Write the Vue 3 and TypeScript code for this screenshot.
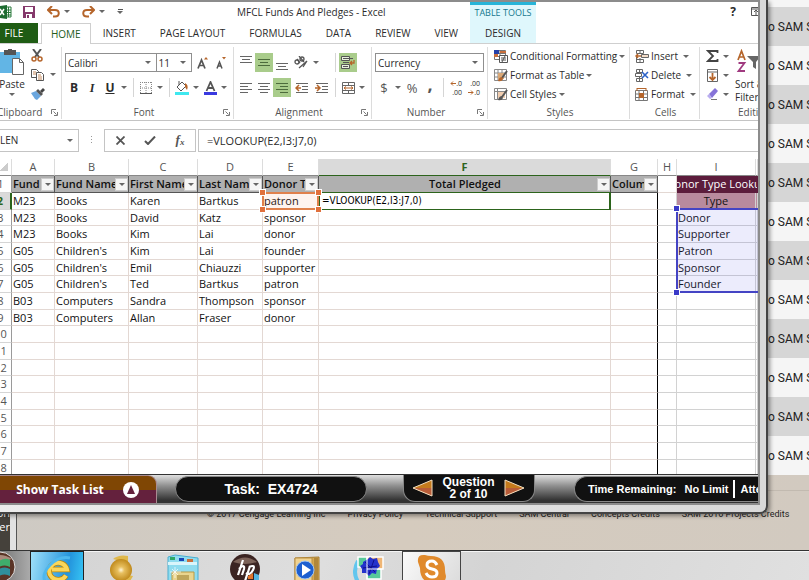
<script setup lang="ts">
import { ref } from 'vue'

interface Donation {
  fund: string
  fundName: string
  first: string
  last: string
  donor: string
}

const donations: Donation[] = [
  { fund: 'M23', fundName: 'Books', first: 'Karen', last: 'Bartkus', donor: 'patron' },
  { fund: 'M23', fundName: 'Books', first: 'David', last: 'Katz', donor: 'sponsor' },
  { fund: 'M23', fundName: 'Books', first: 'Kim', last: 'Lai', donor: 'donor' },
  { fund: 'G05', fundName: "Children's", first: 'Kim', last: 'Lai', donor: 'founder' },
  { fund: 'G05', fundName: "Children's", first: 'Emil', last: 'Chiauzzi', donor: 'supporter' },
  { fund: 'G05', fundName: "Children's", first: 'Ted', last: 'Bartkus', donor: 'patron' },
  { fund: 'B03', fundName: 'Computers', first: 'Sandra', last: 'Thompson', donor: 'sponsor' },
  { fund: 'B03', fundName: 'Computers', first: 'Allan', last: 'Fraser', donor: 'donor' },
]
const lookup: string[] = ['Type', 'Donor', 'Supporter', 'Patron', 'Sponsor', 'Founder']
const headings: string[] = ['Fund', 'Fund Name', 'First Name', 'Last Name', 'Donor Type', 'Total Pledged', 'Column1']
const letters: string[] = ['A', 'B', 'C', 'D', 'E', 'F', 'G', 'H', 'I', '']
const tabs: string[] = ['HOME', 'INSERT', 'PAGE LAYOUT', 'FORMULAS', 'DATA', 'REVIEW', 'VIEW']
const credits: string[] = [
  '© 2017 Cengage Learning Inc',
  'Privacy Policy',
  'Technical Support',
  'SAM Central',
  'Concepts Credits',
  'SAM 2016 Projects Credits',
]

const formula = ref('=VLOOKUP(E2,I3:J7,0)')
const nameBox = ref('LEN')
const fontName = ref('Calibri')
const fontSize = ref('11')
const numberFormat = ref('Currency')
</script>

<template>
  <div class="desktop">
    <div class="stage">
      <div class="site">
        <ul class="bands">
          <li v-for="n in 13" :key="n"><span v-if="n > 1">o SAM S</span></li>
        </ul>
        <footer class="credits">
          <a v-for="c in credits" :key="c" href="#">{{ c }}</a>
        </footer>
        <div class="peek"><span>on</span><span>ter</span></div>
      </div>

      <main class="window">
        <div class="app">
          <header class="chrome">
            <div class="titlebar">
              <svg class="xl" width="12" height="14" viewBox="0 0 12 14"><path d="M5 2h6v10H5z" fill="#fff" stroke="#2b7a3c" /><path d="M6 5h5M6 7.500h5M6 10h5M8.500 2v10" stroke="#2b7a3c" /><path d="M0 1l7-1v14l-7-1z" fill="#1e6b30" /><path d="M0 4l4 6M4 4l-4 6" stroke="#fff" stroke-width="1.500" /></svg>
              <button class="qa" aria-label="Save"><svg width="12" height="12" viewBox="0 0 12 12"><path d="M0 0h12v12H0z" fill="#85386b" /><path d="M2 1h8v5H2z" fill="#fff" /><path d="M3 8h6v4H3z" fill="#fff" /><path d="M4 9h2v3H4z" fill="#85386b" /></svg></button>
              <button class="qa" aria-label="Undo"><svg width="13" height="12" viewBox="0 0 13 12"><path d="M5 0L1 4l4 4M1.500 4H8c5 0 5 6.500 0 6.500H6" fill="none" stroke="#b5652b" stroke-width="2" /></svg><i class="caret" /></button>
              <button class="qa" aria-label="Redo"><svg width="13" height="12" viewBox="0 0 13 12"><path d="M8 0l4 4-4 4M11.500 4H5c-5 0-5 6.500 0 6.500h2" fill="none" stroke="#b5652b" stroke-width="2" /></svg><i class="caret" /></button>
              <button class="qa more" aria-label="Customize"><i class="dash" /><i class="caret" /></button>
              <h1>MFCL Funds And Pledges - Excel</h1>
            </div>
            <div class="context-title">TABLE TOOLS</div>
            <div class="sys">
              <button aria-label="Help">?</button>
              <button aria-label="Ribbon display options"><svg width="10" height="9" viewBox="0 0 10 9"><path d="M.5.500h9v8h-9zM.5 2h9" fill="none" stroke="#555" /><path d="M5 3v5M3 5l2-2 2 2" fill="none" stroke="#555" /></svg></button>
            </div>
            <nav class="tabs">
              <button class="file">FILE</button>
              <button v-for="t in tabs" :key="t" :class="{ active: t === 'HOME' }">{{ t }}</button>
            </nav>
            <button class="design">DESIGN</button>
            <div class="tabfill" />
          </header>

          <section class="ribbon">
            <div class="group clipboard">
              <div class="body">
                <button class="paste">
                  <svg width="24" height="26" viewBox="0 0 24 26"><path d="M0 3h20v21H0z" fill="#62b5e5" /><path d="M4 1h12v5H4z" fill="#555" /><path d="M8 0h4v3H8z" fill="#555" /><path d="M12.500 9.500h7l4 4v12h-11z" fill="#fff" stroke="#666" /><path d="M19.500 9.500v4h4" fill="none" stroke="#666" /></svg>
                  <span>Paste</span><i class="caret" />
                </button>
                <div class="clips">
                  <button aria-label="Cut"><svg width="12" height="13" viewBox="0 0 12 13"><path d="M2 0l6 8M10 0L4 8" stroke="#555" stroke-width="2" /><g fill="none" stroke="#b5652b" stroke-width="1.500"><circle cx="3" cy="10" r="2" /><circle cx="9" cy="10" r="2" /></g></svg></button>
                  <button aria-label="Copy"><svg width="14" height="12" viewBox="0 0 14 12"><g fill="#fff" stroke="#555"><path d="M.5.500h5l2 2v6h-7z" /><path d="M5.500 3.500h5l2 2v6h-7z" /></g><path d="M2 3h3M2 5h3M7 6h3M7 8h4M7 10h4" stroke="#c58a5c" /></svg><i class="caret" /></button>
                  <button aria-label="Format Painter"><svg width="14" height="12" viewBox="0 0 14 12"><path d="M0 5l5-2 5 5-4 4-2-1z" fill="#6aa6de" /><path d="M5 3l2-2 5 5-2 2z" fill="#555" /><path d="M9 3l3-3 2 2-3 3z" fill="#444" /></svg></button>
                </div>
              </div>
              <div class="caption"><span>Clipboard</span><button class="launch" aria-label="Clipboard options"><svg width="7" height="7" viewBox="0 0 7 7"><path d="M.5 5V.500H5M2.500 2.500l3 3M6.500 3v3.500H3" fill="none" stroke="#777" /></svg></button></div>
            </div>

            <div class="group font">
              <div class="line">
                <label class="pick name"><select v-model="fontName" aria-label="Font"><option>Calibri</option></select><i class="caret" /></label>
                <label class="pick size"><select v-model="fontSize" aria-label="Font size"><option>11</option></select><i class="caret" /></label>
                <button class="tool grow" aria-label="Grow font"><svg width="12" height="12" viewBox="0 0 12 12"><path d="M1 11.500L4.500 3 8 11.500M2.500 8.500h4" fill="none" stroke="#555" stroke-width="1.700" /><path d="M7 2.500L9 0l2 2.500z" fill="#b5652b" /></svg></button>
                <button class="tool" aria-label="Shrink font"><svg width="12" height="12" viewBox="0 0 12 12"><path d="M2 11.500L4.500 5 7 11.500M3 9h3" fill="none" stroke="#555" stroke-width="1.500" /><path d="M7 0h4L9 2.500z" fill="#b5652b" /></svg></button>
              </div>
              <div class="line">
                <button class="tool b">B</button><button class="tool i">I</button><button class="tool u">U</button><button class="drop" aria-label="Underline styles"><i class="caret" /></button>
                <i class="sep" />
                <button class="tool" aria-label="Borders"><svg width="12" height="12" viewBox="0 0 12 12"><path d="M0 .5h12M.5 0v11M11.500 0v11M6 0v11M0 6h12" stroke="#888" stroke-dasharray="1 1" /><path d="M0 11.500h12" stroke="#555" /></svg></button><button class="drop" aria-label="Border styles"><i class="caret" /></button>
                <i class="sep" />
                <button class="tool" aria-label="Fill color"><svg width="14" height="14" viewBox="0 0 14 14"><path d="M2 6l5-5 4 4-5 5z" fill="#fff" stroke="#555" /><path d="M4 4V0" stroke="#555" /><path d="M10 2q4 2 2 7l-2-3z" fill="#b5652b" /><path d="M0 11h14v3H0z" fill="#3fe8ef" /></svg></button><button class="drop" aria-label="Fill colors"><i class="caret" /></button>
                <button class="tool" aria-label="Font color"><svg width="13" height="14" viewBox="0 0 13 14"><path d="M2.500 10L6.500 1l4 9M4 7h5" fill="none" stroke="#555" stroke-width="1.800" /><path d="M0 11h13v3H0z" fill="#3a3ae0" /></svg></button><button class="drop" aria-label="Font colors"><i class="caret" /></button>
              </div>
              <div class="caption"><span>Font</span><button class="launch" aria-label="Font options"><svg width="7" height="7" viewBox="0 0 7 7"><path d="M.5 5V.500H5M2.500 2.500l3 3M6.500 3v3.500H3" fill="none" stroke="#777" /></svg></button></div>
            </div>

            <div class="group align">
              <div class="line">
                <button class="tool up" aria-label="Top align"><svg width="12" height="7" viewBox="0 0 12 7"><path d="M0 .5h12M2 3.500h8M0 6.500h12" stroke="#666" /></svg></button>
                <button class="tool on" aria-label="Middle align"><svg width="12" height="7" viewBox="0 0 12 7"><path d="M0 .5h12M2 3.500h8M0 6.500h12" stroke="#4d6b3c" /></svg></button>
                <button class="tool down" aria-label="Bottom align"><svg width="12" height="7" viewBox="0 0 12 7"><path d="M0 .5h12M2 3.500h8M0 6.500h12" stroke="#666" /></svg></button>
                <button class="tool wide" aria-label="Orientation"><svg width="14" height="13" viewBox="0 0 14 13"><g fill="none" stroke="#555" stroke-width="1.300"><circle cx="3" cy="6" r="2" /><path d="M3 3l3 4M5 0l5 6" /><circle cx="8" cy="3" r="2" /><path d="M5 12l8-7M9 11l4-6" /></g></svg></button><button class="drop" aria-label="Orientations"><i class="caret" /></button>
                <i class="sep push" />
                <button class="tool on" aria-label="Wrap text"><svg width="14" height="13" viewBox="0 0 14 13"><path d="M.5.500h8v4h-8zM.5 8.500h8v4h-8z" fill="#e8f0dd" stroke="#555" /><path d="M2 2.500h10M2 6.500h6M2 10.500h5" stroke="#555" /><path d="M13 4v3H9M11 5L9 7l2 2" fill="none" stroke="#b5652b" stroke-width="1.300" /></svg></button>
              </div>
              <div class="line">
                <button class="tool" aria-label="Align left"><svg width="12" height="10" viewBox="0 0 12 10"><path d="M0 .5h12M0 3.500h8M0 6.500h12M0 9.500h8" stroke="#666" /></svg></button>
                <button class="tool" aria-label="Center"><svg width="12" height="10" viewBox="0 0 12 10"><path d="M0 .5h12M2 3.500h8M0 6.500h12M2 9.500h8" stroke="#666" /></svg></button>
                <button class="tool on" aria-label="Align right"><svg width="12" height="10" viewBox="0 0 12 10"><path d="M0 .5h12M4 3.500h8M0 6.500h12M4 9.500h8" stroke="#4d6b3c" /></svg></button>
                <button class="tool wide" aria-label="Decrease indent"><svg width="13" height="10" viewBox="0 0 13 10"><path d="M1 .5h12M7 3.500h6M7 6.500h6M1 9.500h12" stroke="#666" /><path d="M6 5H1M4 2L1 5l3 3" fill="none" stroke="#b5652b" stroke-width="1.500" /></svg></button>
                <button class="tool wide" aria-label="Increase indent"><svg width="13" height="10" viewBox="0 0 13 10"><path d="M1 .5h12M7 3.500h6M7 6.500h6M1 9.500h12" stroke="#666" /><path d="M0 5h5M2 2l3 3-3 3" fill="none" stroke="#b5652b" stroke-width="1.500" /></svg></button>
                <i class="sep" />
                <button class="tool" aria-label="Merge and center"><svg width="13" height="12" viewBox="0 0 13 12"><path d="M.5.500h12v11H.5zM.5 3.500h12M.5 8.500h12M6.500 0v3M6.500 9v3" fill="#fff" stroke="#666" /><path d="M2 6h9M4 4.500L2 6l2 1.500M9 4.500L11 6 9 7.500" fill="none" stroke="#b5652b" /></svg></button><button class="drop" aria-label="Merge options"><i class="caret" /></button>
              </div>
              <div class="caption"><span>Alignment</span><button class="launch" aria-label="Alignment options"><svg width="7" height="7" viewBox="0 0 7 7"><path d="M.5 5V.500H5M2.500 2.500l3 3M6.500 3v3.500H3" fill="none" stroke="#777" /></svg></button></div>
            </div>

            <div class="group number">
              <div class="line">
                <label class="pick format"><select v-model="numberFormat" aria-label="Number format"><option>Currency</option></select><i class="caret" /></label>
              </div>
              <div class="line">
                <button class="tool sym">$</button><button class="drop" aria-label="Accounting formats"><i class="caret" /></button>
                <button class="tool sym">%</button><button class="tool comma">,</button>
                <i class="sep" />
                <button class="tool dec" aria-label="Increase decimal"><span><svg width="6" height="5" viewBox="0 0 6 5"><path d="M6 2.500H1M3 .5l-2 2 2 2" fill="none" stroke="#b5652b" /></svg>.0</span><span>.00</span></button>
                <button class="tool dec" aria-label="Decrease decimal"><span>.00</span><span><svg width="6" height="5" viewBox="0 0 6 5"><path d="M0 2.500h5M3 .5l2 2-2 2" fill="none" stroke="#b5652b" /></svg>.0</span></button>
              </div>
              <div class="caption"><span>Number</span><button class="launch" aria-label="Number options"><svg width="7" height="7" viewBox="0 0 7 7"><path d="M.5 5V.500H5M2.500 2.500l3 3M6.500 3v3.500H3" fill="none" stroke="#777" /></svg></button></div>
            </div>

            <div class="group styles">
              <div class="stack">
                <button><svg width="14" height="13" viewBox="0 0 14 13"><path d="M.5.500h11v9H.5zM6 0v9M0 3.500h11M0 6.500h11" fill="#fff" stroke="#777" /><path d="M0 0h5v4H0z" fill="#2440a8" /><path d="M6 1h6v2H6z" fill="#c96f3c" /><path d="M0 4h4v3H0z" fill="#c96f3c" /><path d="M5.500 5.500h8v7h-8z" fill="#fff" stroke="#555" /><path d="M7 8h5M7 10h5M11 6l-3 6" stroke="#555" /></svg>Conditional Formatting<i class="caret" /></button>
                <button><svg width="14" height="13" viewBox="0 0 14 13"><path d="M.5.500h12v11H.5zM4 0v11M8 0v11M0 4h12M0 8h12" fill="#fff" stroke="#888" /><path d="M4 4h6v6H4z" fill="#d9a877" /><path d="M13 2L8 9" stroke="#555" stroke-width="2" /><path d="M4 12q1-4 4-4l1 2q-1 3-5 2z" fill="#b5652b" /></svg>Format as Table<i class="caret" /></button>
                <button><svg width="14" height="13" viewBox="0 0 14 13"><path d="M.5.500h12v11H.5zM3.500 0v11M0 3.500h12" fill="#fff" stroke="#888" /><path d="M4 4h7v6H4z" fill="#f0cdb0" /><path d="M13 2L8 9" stroke="#555" stroke-width="2" /><path d="M4 12q1-4 4-4l1 2q-1 3-5 2z" fill="#555" /></svg>Cell Styles<i class="caret" /></button>
              </div>
              <div class="caption"><span>Styles</span></div>
            </div>

            <div class="group cells">
              <div class="stack">
                <button><svg width="14" height="13" viewBox="0 0 14 13"><path d="M1.500.5h7v3h-7zM5 0v4M1.500 9.500h7v3h-7zM5 8v5M1.500 6v4" fill="#fff" stroke="#666" /><path d="M6.500 4.500h7v3h-7z" fill="#f3dcc8" stroke="#666" /><path d="M6 6H1M3 4L1 6l2 2" fill="none" stroke="#b5652b" stroke-width="1.500" /></svg><span>Insert</span><i class="caret" /></button>
                <button><svg width="14" height="13" viewBox="0 0 14 13"><path d="M1.500.5h6v3h-6zM4.500 0v4M1.500 9.500h6v3h-6zM4.500 8v5M.5 4.500h6v3h-6z" fill="#fff" stroke="#666" /><path d="M7 3l6 6M13 3L7 9" stroke="#2c62c8" stroke-width="1.600" /></svg><span>Delete</span><i class="caret" /></button>
                <button><svg width="14" height="13" viewBox="0 0 14 13"><path d="M.5 2.500h12v10H.5zM4 2v10M8.500 2v10M0 6h12M0 9.500h12" fill="#fff" stroke="#777" /><path d="M4 5h5v5H4z" fill="#b5652b" /><path d="M2 .5h9M2 0v3M11 0v3" stroke="#b5652b" /></svg><span>Format</span><i class="caret" /></button>
              </div>
              <div class="caption"><span>Cells</span></div>
            </div>

            <div class="group editing">
              <div class="body">
                <div class="stack">
                  <button aria-label="AutoSum"><svg width="13" height="12" viewBox="0 0 13 12"><path d="M11.500 3V1H2l5 5-5 5h9.500V9" fill="none" stroke="#444" stroke-width="1.800" /></svg><i class="caret" /></button>
                  <button aria-label="Fill"><svg width="13" height="13" viewBox="0 0 13 13"><path d="M1.500.5h10v12h-10zM1.500 3h10" fill="#fff" stroke="#666" /><path d="M6.500 4v7M3.500 8l3 3 3-3" fill="none" stroke="#b5652b" stroke-width="1.800" /></svg><i class="caret" /></button>
                  <button aria-label="Clear"><svg width="13" height="12" viewBox="0 0 13 12"><path d="M3 6l6-6 3 3-6 7z" fill="#8673d8" /><path d="M3 6l3 4-2 1-3-3z" fill="#b9adf0" /><path d="M5 11.500h6" stroke="#777" /></svg><i class="caret" /></button>
                </div>
                <button class="sort">
                  <svg width="26" height="24" viewBox="0 0 26 24"><path d="M3 11L6.500 2 10 11M4.500 8h4" fill="none" stroke="#b5652b" stroke-width="1.700" /><path d="M3.500 14h6l-6 8h6.500" fill="none" stroke="#a03a80" stroke-width="1.800" /><path d="M12 7h14l-5 6v7l-3-2v-5z" fill="#666" /></svg>
                  <span>Sort &amp;</span><span>Filter</span>
                </button>
              </div>
              <div class="caption"><span>Editing</span></div>
            </div>
          </section>

          <section class="entry">
            <label class="namebox"><input v-model="nameBox" aria-label="Name box" /><i class="caret" /></label>
            <i class="dots" />
            <div class="confirm">
              <button aria-label="Cancel"><svg width="9" height="9" viewBox="0 0 9 9"><path d="M.5.500l8 8M8.500.5l-8 8" stroke="#555" stroke-width="1.800" /></svg></button>
              <button aria-label="Enter"><svg width="12" height="9" viewBox="0 0 12 9"><path d="M1 5l3 3 7-7.500" fill="none" stroke="#555" stroke-width="2" /></svg></button>
              <button class="fx" aria-label="Insert function">f<small>x</small></button>
            </div>
            <input v-model="formula" class="formula" aria-label="Formula" />
          </section>

          <section class="sheet">
            <table>
              <colgroup><col class="c-n" /><col class="c-a" /><col class="c-b" /><col class="c-c" /><col class="c-d" /><col class="c-e" /><col /><col class="c-g" /><col class="c-h" /><col class="c-i" /><col class="c-j" /></colgroup>
              <thead>
                <tr><th class="corner"><i /></th><th v-for="l in letters" :key="l" :class="{ current: l === 'F' }">{{ l }}</th></tr>
              </thead>
              <tbody>
                <tr class="fields">
                  <th>1</th>
                  <th v-for="h in headings" :key="h" class="field" :class="{ mid: h === 'Total Pledged' }"><div><span>{{ h }}</span><button :aria-label="'Filter ' + h"><i class="caret" /></button></div></th>
                  <td />
                  <td colspan="2" class="lookup-title"><div><span>Donor Type Lookup</span></div></td>
                </tr>
                <tr v-for="n in 17" :key="n">
                  <th :class="{ current: n === 1 }">{{ n + 1 }}</th>
                  <td>{{ donations[n - 1]?.fund }}</td>
                  <td>{{ donations[n - 1]?.fundName }}</td>
                  <td>{{ donations[n - 1]?.first }}</td>
                  <td>{{ donations[n - 1]?.last }}</td>
                  <td :class="{ host: n === 1 }">{{ donations[n - 1]?.donor }}<i v-if="n === 1" class="range orange"><b /><b /><b /><b /></i></td>
                  <td :class="{ host: n === 1, draft: n === 1 }"><template v-if="n === 1">{{ formula }}<i class="cellbox" /></template></td>
                  <td class="edge" />
                  <td class="plain" />
                  <td class="plain" :class="{ kind: n === 1, host: n === 2 }">{{ lookup[n - 1] }}<i v-if="n === 2" class="range blue"><b /><b /></i></td>
                  <td class="plain" :class="{ kind: n === 1 }" />
                </tr>
              </tbody>
            </table>
          </section>

          <footer class="exam">
            <button class="tasks">Show Task List<svg width="18" height="18" viewBox="0 0 18 18"><circle cx="9" cy="9" r="8" fill="#fff" /><path d="M9 4l4 9H5z" fill="#64213d" /></svg></button>
            <div class="pill task">Task:&nbsp; EX4724</div>
            <div class="question">
              <button aria-label="Previous question"><svg width="22" height="18" viewBox="0 0 22 18"><path d="M1 9l19-8v16z" fill="#c47a1c" /><path d="M1 9h19v8z" fill="#b85c38" /><path d="M1 9l19-8v16z" fill="none" stroke="#f3dfc0" /></svg></button>
              <p>Question<br />2 of 10</p>
              <button aria-label="Next question"><svg width="22" height="18" viewBox="0 0 22 18"><path d="M21 9L2 1v16z" fill="#c47a1c" /><path d="M21 9H2v8z" fill="#b85c38" /><path d="M21 9L2 1v16z" fill="none" stroke="#f3dfc0" /></svg></button>
            </div>
            <div class="pill time"><span>Time Remaining:</span><span class="limit">No Limit</span><span class="attempts">Attempts</span></div>
          </footer>
        </div>
      </main>
    </div>

    <nav class="taskbar">
      <button class="start" aria-label="Start"><svg width="32" height="32" viewBox="0 0 32 32"><circle cx="16" cy="16" r="15" fill="#5a3426" stroke="#ddd" /><path d="M4 8q12-8 24 0-10 4-24 0z" fill="#a88a7c" /><path d="M15 10q6-4 11-1v7q-5-3-11 0z" fill="#3fae6c" /><path d="M15 18q6-3 11 0v7q-5-3-11 0z" fill="#2f8f9c" /></svg></button>
      <button class="ie" aria-label="Internet Explorer"><svg width="32" height="30" viewBox="0 0 32 30"><path d="M25 21.500a9 8.500 0 1 1 1-6H11" fill="none" stroke="#b8860b" stroke-width="5.500" /><path d="M25 21.500a9 8.500 0 1 1 1-6H11" fill="none" stroke="#fbd65a" stroke-width="4" /><path d="M4 27C-1 18 14 1 29 4" fill="none" stroke="#4db8ee" stroke-width="3" /></svg></button>
      <button class="item" aria-label="Sync"><svg width="26" height="30" viewBox="0 0 26 30"><defs><radialGradient id="gold"><stop offset="0" stop-color="#fff6d8" /><stop offset=".3" stop-color="#e8c060" /><stop offset="1" stop-color="#c08a1c" /></radialGradient></defs><path d="M5 5q6-5 15-3v7z" fill="#dfb84b" /><path d="M14 20l11 2-4 7z" fill="#dfb84b" /><circle cx="13" cy="16" r="11" fill="url(#gold)" /></svg></button>
      <button class="item" aria-label="Explorer"><svg width="32" height="29" viewBox="0 0 32 29"><path d="M1 3l7-2 23 3v25H1z" fill="#8fdcef" stroke="#4aaed0" /><path d="M3 3h5v3H3z" fill="#2fa866" /><path d="M12 4h5v3h-5z" fill="#1846b8" /><path d="M20 5h6v3h-6z" fill="#c96f3c" /><path d="M1 8h29v3H1z" fill="#d9f5fb" /><path d="M5 18h22v11H5z" fill="#e9d58e" stroke="#b89a45" /><path d="M10 21h12v8H10z" fill="#bfa65a" /><path d="M8 13v11M3 18h11M5 15l6 6M11 15l-6 6" stroke="#fff" stroke-width=".7" /></svg></button>
      <button class="item" aria-label="HP Support"><svg width="32" height="30" viewBox="0 0 32 30"><circle cx="16" cy="15" r="15" fill="#3b2422" /><path d="M4 8q12-9 24 0-12 4-24 0z" fill="#7c6258" /><path d="M14 6l-5 15M10 15q6-6 5 0l-2 6M21 12l-5 15M20 13q7-3 4 3t-7 3" fill="none" stroke="#fff" stroke-width="2.200" /><path d="M19 22l5-3v6h-5z" fill="#e3752b" /><path d="M25 19l5 2v5h-5z" fill="#54b4e0" /><path d="M19 26h5v4h-5z" fill="#3fa9e0" /><path d="M25 26h5v4h-5z" fill="#efc23d" /></svg></button>
      <button class="item" aria-label="Media Player"><svg width="30" height="28" viewBox="0 0 30 28"><path d="M3 4l24-1v25H3z" fill="#d8a94f" stroke="#a77f34" /><path d="M3 4h17v24H3z" fill="#f0d391" stroke="#b88f45" /><path d="M23 4v24M25 4v24" stroke="#8a6728" /><circle cx="13" cy="16" r="9" fill="#1d5fd0" stroke="#9fc3f2" /><path d="M10 10l9 6-9 6z" fill="#fff" /></svg></button>
      <button class="item" aria-label="Photo Gallery"><svg width="32" height="28" viewBox="0 0 32 28"><path d="M5 7Q-1 18 5 28" fill="none" stroke="#62c6ee" stroke-width="4" /><path d="M5 3h12v10H5zM14 14h14v11H14z" fill="#58c99a" stroke="#fff" stroke-width="1.500" /><path d="M14 3h16v12H14z" fill="#efb676" stroke="#fff" stroke-width="1.500" /><path d="M10 8l5-3 2-2 3 2 4-1 1 4 2 4-3 3-1 5-4-1-3 3-3-3-4 0 0-4-2-3 3-2z" fill="#2432cc" /><path d="M12 8l10 10M21 6l-5 14M10 14l14-2" stroke="#10108a" /><path d="M14 3v12h15M14 15v10" fill="none" stroke="#fff" stroke-width="1" /></svg></button>
      <button class="skype" aria-label="Skype"><svg width="32" height="30" viewBox="0 0 32 30"><path d="M2 8q-1-8 7-7 3 1 6 1 14 0 14 14 0 3 1 6 0 7-8 7-18 2-18-15z" fill="#e08a2c" /><path d="M21 11q-2-4-5-4-5 0-5 4 0 3 5 4 5 1 5 4 0 4-5 4-4 0-6-4" fill="none" stroke="#fff" stroke-width="3" /></svg></button>
    </nav>
  </div>
</template>

<style>
body { margin: 0; overflow: hidden; }
</style>

<style scoped>
.desktop { display: flex; flex-direction: column; height: 100vh; overflow: hidden; font-family: "Open Sans", "Noto Sans", sans-serif; font-size: 10px; line-height: 14px; color: #2b2b2b; }
.desktop * { box-sizing: border-box; }
button { display: flex; align-items: center; justify-content: center; padding: 0; border: 0; background: none; font: inherit; color: inherit; }
input, select { font: inherit; color: inherit; border: 0; padding: 0; margin: 0; background: none; min-width: 0; outline: 0; }
svg { display: block; flex: none; }
.caret { flex: none; width: 0; height: 0; border: 3px solid transparent; border-top-color: #666; border-bottom: 0; }
.stage { position: relative; flex: 1; min-height: 0; }

.site { display: flex; flex-direction: column; height: 100%; overflow: hidden; background: linear-gradient(90deg, #cecac4, #d5cbbe 50%, #d2cac0); }
.bands { flex: none; height: 475px; margin: 0; padding: 0; list-style: none; display: flex; flex-direction: column; justify-content: flex-end; font: 12px/41px Roboto, sans-serif; color: #222; overflow: hidden; }
.bands li { flex: none; height: 39px; padding-left: calc(100% - 41px); background: #d6d6d6; white-space: nowrap; }
.bands li:nth-child(odd) { background: #f5f5f5; }
.credits { display: flex; gap: 22px; flex: none; margin-top: 15px; padding: 16px 0 0 207px; border-top: 1px solid #c2bab0; font: 9px/14px Roboto, sans-serif; white-space: nowrap; }
.credits a { color: #222; text-decoration: none; }
.peek { position: absolute; left: 0; bottom: 0; width: 17px; height: 44px; display: flex; flex-direction: column; background: #45413b; border-right: 1px solid #555; box-shadow: inset -6px 0 #e2e2e2; color: #fff; font-size: 11px; line-height: 14px; }
.peek span { width: 10px; overflow: hidden; direction: rtl; }

.window { position: absolute; inset: 0 41px 36px 0; padding: 0 6px 7px 0; background: linear-gradient(90deg, #ececec, #d9d9d9); border: 1px solid #444; border-width: 0 2px 2px 0; border-radius: 0 0 8px 0; box-shadow: 2px 2px 4px #0006; }
.app { display: flex; flex-direction: column; height: 100%; overflow: hidden; background: #fff; border: 2px solid #8c8c8c; border-left: 0; }

.chrome { flex: none; display: grid; grid-template-columns: 470px 66px 1fr; grid-template-rows: 21px 21px; }
.titlebar { display: flex; align-items: center; height: 19px; }
.xl { margin-right: 11px; }
.qa { gap: 4px; margin-right: 12px; }
.qa.more { flex-direction: column; gap: 1px; margin-right: 0; }
.dash { width: 5px; height: 1px; background: #555; }
h1 { margin: 0 0 0 114px; font-size: 10px; font-weight: 400; white-space: nowrap; }
.context-title { padding-top: 1px; border-top: 3px solid #27b4d8; background: #dff7fc; color: #16788f; font-size: 9px; text-align: center; white-space: nowrap; }
.sys { display: flex; justify-content: flex-end; align-items: center; gap: 15px; height: 19px; font-weight: 700; font-size: 12px; margin-right: -3px; }
.tabs { display: flex; border-bottom: 1px solid #cfcfcf; }
.tabs button { padding: 0 12px; white-space: nowrap; }
.tabs .file { width: 39px; padding: 0 10px 0 0; margin-right: 3px; background: #1f5c14; color: #fff; }
.tabs .active { width: 52px; padding: 0; border: 1px solid #cfcfcf; border-bottom: 0; color: #245c1a; background: #fff; margin-bottom: -1px; }
.design { border-bottom: 1px solid #cfcfcf; background: #dff7fc; }
.tabfill { border-bottom: 1px solid #cfcfcf; }

.ribbon { flex: none; display: flex; height: 77px; padding-top: 3px; border-bottom: 1px solid #c4c4c4; }
.group { flex: none; display: flex; flex-direction: column; border-right: 1px solid #dcdcdc; padding: 0 3px; margin-bottom: 1px; }
.body { display: flex; }
.clipboard { width: 62px; padding-left: 0; }
.font { width: 172px; }
.align { width: 138px; }
.number { width: 116px; }
.styles { width: 142px; padding-left: 6px; }
.cells { width: 70px; padding-left: 5px; }
.editing { width: 90px; padding-left: 6px; border: 0; }
.caption { display: flex; align-items: center; margin-top: auto; height: 14px; color: #555; }
.caption span { flex: 1; text-align: center; }
.clipboard .caption span { margin-left: -3px; text-align: left; }
.editing .caption span { padding-left: 32px; text-align: left; }
.paste { flex-direction: column; justify-content: flex-start; width: 24px; padding-top: 2px; gap: 2px; }
.clips { display: flex; flex-direction: column; gap: 6px; padding: 2px 0 0 7px; }
.clips button { justify-content: flex-start; height: 13px; gap: 5px; }
.line { display: flex; align-items: center; height: 19px; margin-top: 6px; }
.tool { flex: none; width: 18px; height: 19px; font-size: 12px; }
.wide { width: 20px; }
.drop { flex: none; width: 10px; height: 19px; }
.sep { flex: none; width: 1px; height: 19px; margin: 0 3px 0 4px; background: #d5d5d5; }
.sep.push { margin-left: 14px; }
.on { background: #a9cc8b; }
.up { align-items: flex-start; padding-top: 3px; }
.down { align-items: flex-end; padding-bottom: 2px; }
.b, .i, .u { font-weight: 700; }
.i { font-family: "Liberation Serif", serif; font-style: italic; }
.u { text-decoration: underline; }
.sym { font-size: 13px; color: #555; }
.comma { font-size: 18px; font-weight: 700; padding-bottom: 8px; color: #555; }
.dec { flex-direction: column; align-items: flex-end; padding-right: 3px; font-size: 7px; line-height: 9px; }
.dec span { display: flex; align-items: center; }
.pick { display: flex; align-items: center; height: 19px; padding: 0 5px 0 2px; border: 1px solid #8f8f8f; }
.pick select { flex: 1; appearance: none; }
.name { width: 93px; }
.size { width: 36px; border-left: 0; }
.format { flex: 1; }
.grow { margin-left: 2px; }
.stack { display: flex; flex-direction: column; gap: 5px; padding-top: 2px; }
.stack button { justify-content: flex-start; height: 14px; gap: 2px; white-space: nowrap; }
.cells .caret { margin-left: 3px; }
.editing .stack button { gap: 4px; }
.sort { flex-direction: column; align-items: flex-start; justify-content: flex-start; margin-left: 6px; padding-top: 2px; white-space: nowrap; line-height: 13px; }
.sort svg { margin-bottom: 5px; }

.entry { flex: none; display: flex; align-items: center; height: 38px; }
.namebox { display: flex; align-items: center; width: 79px; height: 23px; padding: 0 5px 0 0; border: 1px solid #c4c4c4; border-left: 0; }
.namebox input { flex: 1; }
.dots { width: 25px; height: 8px; background: repeating-linear-gradient(#999 0 1px, transparent 1px 3px) 12px 0 / 1px 8px no-repeat; }
.confirm { display: flex; align-items: center; width: 92px; height: 23px; border: 1px solid #c4c4c4; margin-right: 2px; }
.confirm button { flex: 1; }
.fx { font: italic 700 13px/14px "Liberation Serif", serif; color: #555; }
.fx small { font-size: 9px; padding-top: 4px; }
.formula { flex: 1; height: 23px; padding-left: 8px; border: 1px solid #c4c4c4; border-right: 0; font-size: 11px; }

.sheet { flex: 1; min-height: 0; overflow: hidden; }
table { width: calc(100% + 10px); margin-left: -10px; table-layout: fixed; border-collapse: separate; border-spacing: 0; font-size: 11px; line-height: 14px; color: #111; }
.c-n { width: 22px; }
.c-a { width: 43px; }
.c-b { width: 74px; }
.c-c { width: 69px; }
.c-d { width: 65px; }
.c-e { width: 56px; }
.c-g { width: 47px; }
.c-h { width: 19px; }
.c-i { width: 79px; }
.c-j { width: 2px; }
tr { height: 17px; }
tbody tr:nth-child(3n) { height: 16px; }
td, th { padding: 0; white-space: nowrap; }
thead th { font-weight: 400; color: #555; border-right: 1px solid #dcdcdc; border-bottom: 1px solid #888; }
thead .current { color: #2c641c; font-weight: 700; background: #dadada; border-bottom: 1px solid #2c641c; }
.corner i { display: block; margin-left: auto; margin-right: 3px; width: 8px; height: 8px; background: linear-gradient(135deg, transparent 50%, #ccc 50%); }
tbody th:first-child { font-weight: 400; color: #555; border-right: 1px solid #9a9a9a; border-bottom: 1px solid #d5d5d5; }
tbody th.current:first-child { font-weight: 700; color: #2c641c; background: #dadada; border-right: 2px solid #2c641c; }
td { padding-left: 1px; border-right: 1px solid #e3d8d3; border-bottom: 1px solid #e3d8d3; }
td.plain { border-color: #d2d2d2; }
td.edge { border-right: 1px solid #000; }
.field { background: #b0b0b0; border-right: 1px solid #555; border-bottom: 1px solid #555; color: #111; font-weight: 600; }
.field div { display: flex; align-items: center; height: 15px; padding-left: 1px; }
.field span { flex: 1; min-width: 0; overflow: hidden; text-align: left; }
.field.mid span { text-align: center; padding-left: 13px; }
.field button { flex: none; width: 13px; height: 13px; background: #f5f5f5; border: 1px solid #ccc; }
td.lookup-title { padding: 0; background: #5c1c3c; color: #fff; border-color: #5c1c3c; }
.lookup-title div { display: flex; justify-content: center; overflow: hidden; }
td.kind { background: #b98a9e; text-align: center; padding: 0; }
.host { position: relative; }
td.draft { font: 10px/14px "DejaVu Sans Condensed", "DejaVu Sans", sans-serif; padding-left: 3px; color: #000; }
.cellbox { position: absolute; inset: -1px -1px -1px 0; border: 1px solid #2c641c; border-right-width: 2px; }
.range { position: absolute; z-index: 1; }
.range b { position: absolute; width: 5px; height: 5px; border: 1px solid #fff; box-sizing: content-box; margin: -5px; }
.range b:nth-child(1) { left: 0; top: 0; }
.range b:nth-child(2) { left: 0; bottom: 0; }
.range b:nth-child(3) { right: 0; top: 0; }
.range b:nth-child(4) { right: 0; bottom: 0; }
.orange { inset: -1px; border: 2px solid #e0804c; background: #f0805018; }
.orange b { background: #e0703c; }
.blue { left: -1px; top: -2px; width: 120px; height: 85px; border: 2px solid #4444c4; background: #5050e81c; }
.blue b { background: #3a3ac8; }

.exam { flex: none; display: flex; height: 29px; border-top: 1px solid #333; background: linear-gradient(#e0e0e0, #8d8d8d 40%, #333 90%); color: #fff; font: 700 13px/14px "Liberation Sans", sans-serif; white-space: nowrap; overflow: hidden; }
.tasks { flex: none; width: 157px; gap: 18px; background: linear-gradient(#7f4604 50%, #64213d 50%); border: 1px solid #a98a90; border-left: 0; border-bottom: 0; border-radius: 0 9px 0 0; font: 700 12px/14px "Open Sans", sans-serif; }
.pill { display: flex; align-items: center; height: 26px; margin-top: 1px; background: #111; border: 1px solid #888; border-radius: 13px; }
.task { flex: none; width: 192px; margin-left: 18px; justify-content: center; font-size: 14px; }
.question { flex: none; display: flex; align-items: center; justify-content: space-between; width: 132px; height: 27px; margin-left: 36px; padding: 0 9px 0 8px; background: #111; border: 1px solid #888; border-top: 0; border-radius: 0 0 12px 12px; font-size: 12px; line-height: 12px; text-align: center; }
.question p { margin: 0; }
.time { flex: 1; margin-left: 39px; padding-left: 13px; border-right: 0; border-radius: 13px 0 0 13px; font-size: 11px; }
.limit { margin: 0 5px 0 8px; }
.attempts { padding-left: 5px; border-left: 2px solid #fff; line-height: 18px; }

.taskbar { flex: none; display: flex; align-items: flex-start; height: 30px; border-top: 1px solid #333; background: linear-gradient(110deg, #d2d2d2, #dedede 40%, #d4d4d4 60%, #e0e0e0); box-shadow: inset 0 1px #f5f5f5; overflow: hidden; }
.taskbar button { flex: none; height: 29px; align-items: flex-start; }
.start { width: 30px; justify-content: flex-end; padding-right: 14px; background: linear-gradient(90deg, #777, #aaa); }
.taskbar .ie { width: 54px; padding-top: 2px; border: 1px solid #222; border-bottom: 0; background: linear-gradient(100deg, #9fe0fa, #2494dc 70%, #36c4f4); margin-right: 6px; }
.taskbar .item { width: 62px; padding-top: 3px; }
.taskbar .skype { width: 59px; margin-left: 2px; padding-top: 2px; border: 1px solid #444; border-bottom: 0; background: linear-gradient(120deg, #fafafa, #dcdcdc); }
</style>
